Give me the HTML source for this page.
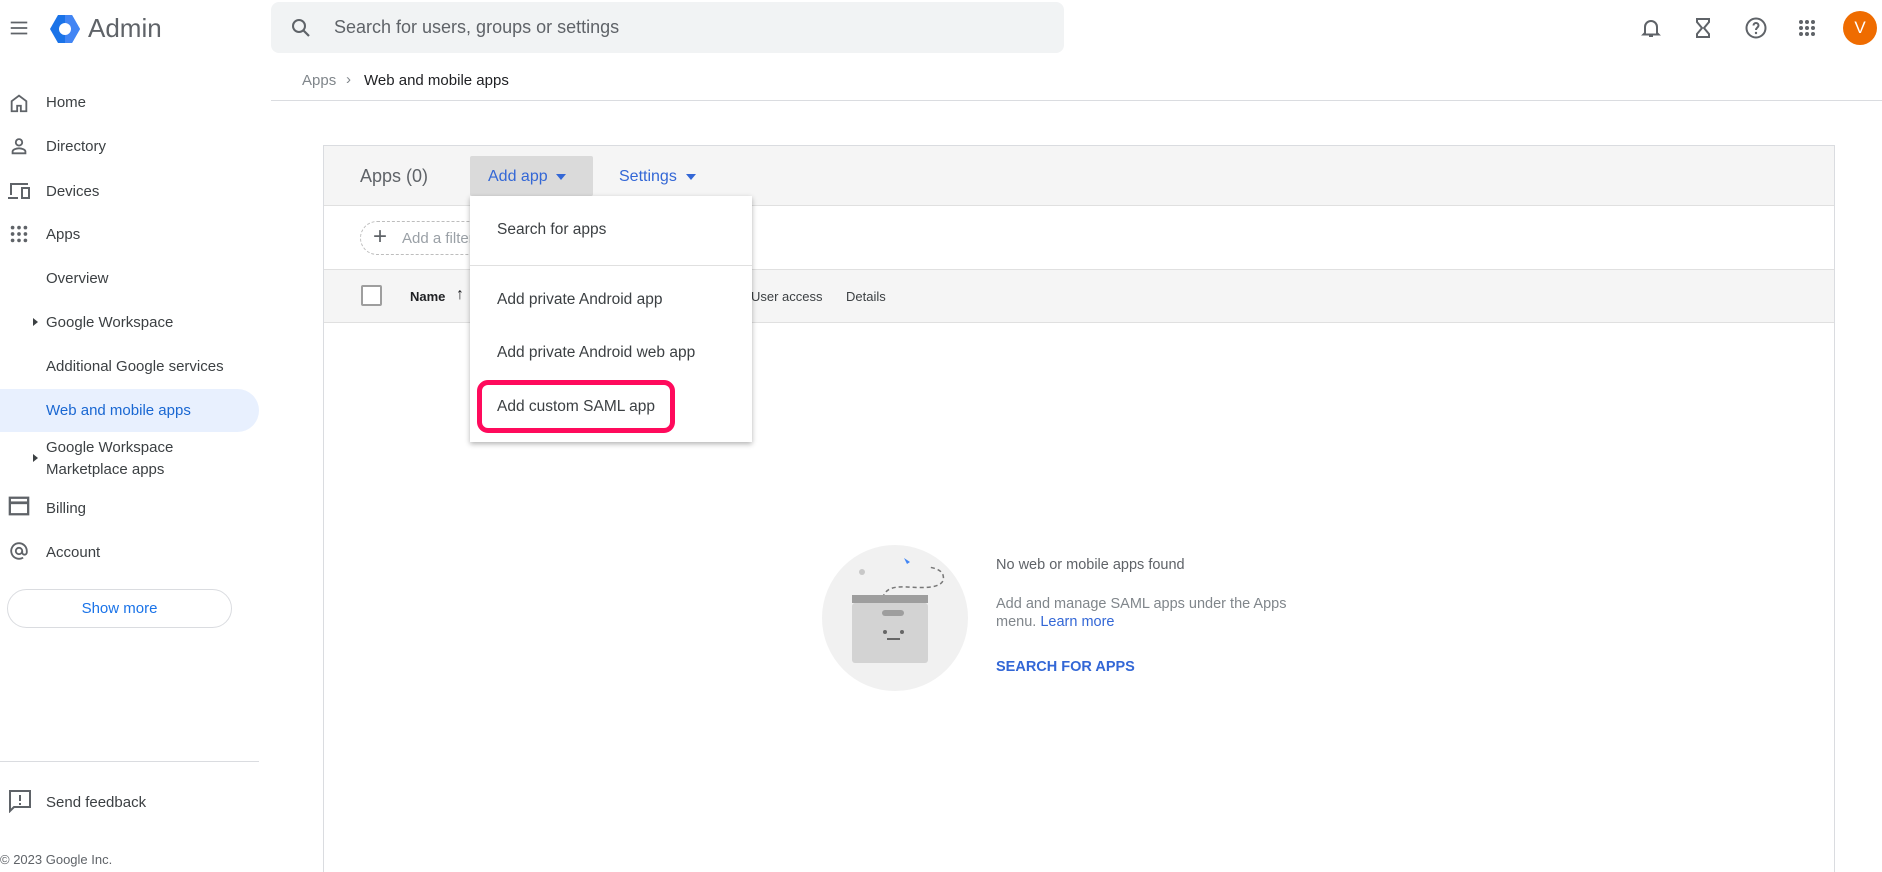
<!DOCTYPE html>
<html style="width:1882px;height:872px;overflow:hidden"><head><meta charset="utf-8"><style>
*{box-sizing:border-box;margin:0;padding:0}
body{width:1882px;height:872px;overflow:hidden;background:#fff;font-family:"Liberation Sans",Arial,sans-serif;color:#3c4043;position:relative}
.a{position:absolute;white-space:nowrap}
.nav{font-size:15px;color:#3c4043}
.blue{color:#3367d6}
</style></head><body>
<svg class="a" style="left:8px;top:17px" width="22" height="22" viewBox="0 0 24 24"><path d="M3 6h18M3 12h18M3 18h18" stroke="#5f6368" stroke-width="2"/></svg>
<svg class="a" style="left:49px;top:13px" width="32" height="32" viewBox="0 0 32 32"><path d="M9 2h14l8 14-8 14H9L1 16z" fill="#1a73e8"/><path d="M23 2l8 14-8 14H16V2z" fill="#4285f4"/><circle cx="16" cy="16" r="6" fill="#fff"/></svg>
<div class="a" style="left:88px;top:13px;font-size:26px;color:#5f6368">Admin</div>
<div class="a" style="left:271px;top:2px;width:793px;height:51px;background:#f1f3f4;border-radius:8px"></div>
<svg class="a" style="left:289px;top:16px" width="24" height="24" viewBox="0 0 24 24"><circle cx="10" cy="10" r="6" fill="none" stroke="#5f6368" stroke-width="2"/><path d="M14.5 14.5L20 20" stroke="#5f6368" stroke-width="2.2"/></svg>
<div class="a" style="left:334px;top:17px;font-size:18px;color:#5f6368">Search for users, groups or settings</div>
<svg class="a" style="left:1639px;top:16px" width="24" height="24" viewBox="0 0 24 24"><path d="M6 17V11a6 6 0 0112 0v6l1.5 1.5h-15z M10 20h4" fill="none" stroke="#5f6368" stroke-width="2"/></svg>
<svg class="a" style="left:1691px;top:16px" width="24" height="24" viewBox="0 0 24 24"><path d="M6 3h12v3l-5 6 5 6v3H6v-3l5-6-5-6z" fill="none" stroke="#5f6368" stroke-width="2"/></svg>
<svg class="a" style="left:1744px;top:16px" width="24" height="24" viewBox="0 0 24 24"><circle cx="12" cy="12" r="9.5" fill="none" stroke="#5f6368" stroke-width="2"/><path d="M9.5 9.5a2.5 2.5 0 115 0c0 2-2.5 2-2.5 4.5" fill="none" stroke="#5f6368" stroke-width="2"/><circle cx="12" cy="17" r="1.2" fill="#5f6368"/></svg>
<svg class="a" style="left:1795px;top:16px" width="24" height="24" viewBox="0 0 24 24" fill="#5f6368"><circle cx="6" cy="6" r="2"/><circle cx="12" cy="6" r="2"/><circle cx="18" cy="6" r="2"/><circle cx="6" cy="12" r="2"/><circle cx="12" cy="12" r="2"/><circle cx="18" cy="12" r="2"/><circle cx="6" cy="18" r="2"/><circle cx="12" cy="18" r="2"/><circle cx="18" cy="18" r="2"/></svg>
<div class="a" style="left:1843px;top:11px;width:34px;height:34px;border-radius:50%;background:#ef6c00;color:#fff;font-size:17px;text-align:center;line-height:34px">V</div>
<div class="a" style="left:302px;top:72px;font-size:15px;color:#80868b">Apps</div>
<div class="a" style="left:346px;top:71px;font-size:15px;color:#80868b">›</div>
<div class="a" style="left:364px;top:72px;font-size:15px;color:#202124">Web and mobile apps</div>
<div class="a" style="left:271px;top:100px;width:1611px;height:1px;background:#dadce0"></div>
<div class="a" style="left:0;top:389px;width:259px;height:43px;background:#e8f0fe;border-radius:0 22px 22px 0"></div>
<svg class="a" style="left:8px;top:92px" width="22" height="22" viewBox="0 0 24 24"><path d="M4 21V10l8-6 8 6v11h-6v-6h-4v6z" fill="none" stroke="#5f6368" stroke-width="2"/></svg>
<div class="a nav" style="left:46px;top:94px">Home</div>
<svg class="a" style="left:8px;top:135px" width="22" height="22" viewBox="0 0 24 24"><circle cx="12" cy="8" r="3.5" fill="none" stroke="#5f6368" stroke-width="2"/><path d="M5 20v-2c0-2 4-3.5 7-3.5s7 1.5 7 3.5v2z" fill="none" stroke="#5f6368" stroke-width="2"/></svg>
<div class="a nav" style="left:46px;top:138px">Directory</div>
<svg class="a" style="left:7px;top:180px" width="24" height="22" viewBox="0 0 24 22"><path d="M4 15V4h17M1 18h10M15 8h7v10h-7z" fill="none" stroke="#5f6368" stroke-width="2"/></svg>
<div class="a nav" style="left:46px;top:183px">Devices</div>
<svg class="a" style="left:8px;top:223px" width="22" height="22" viewBox="0 0 24 24" fill="#5f6368"><circle cx="5" cy="5" r="2"/><circle cx="12" cy="5" r="2"/><circle cx="19" cy="5" r="2"/><circle cx="5" cy="12" r="2"/><circle cx="12" cy="12" r="2"/><circle cx="19" cy="12" r="2"/><circle cx="5" cy="19" r="2"/><circle cx="12" cy="19" r="2"/><circle cx="19" cy="19" r="2"/></svg>
<div class="a nav" style="left:46px;top:226px">Apps</div>
<div class="a nav" style="left:46px;top:270px">Overview</div>
<div class="a" style="left:33px;top:318px;border-left:5px solid #3c4043;border-top:4px solid transparent;border-bottom:4px solid transparent"></div>
<div class="a nav" style="left:46px;top:314px">Google Workspace</div>
<div class="a nav" style="left:46px;top:358px">Additional Google services</div>
<div class="a nav" style="left:46px;top:402px;color:#1967d2">Web and mobile apps</div>
<div class="a" style="left:33px;top:454px;border-left:5px solid #3c4043;border-top:4px solid transparent;border-bottom:4px solid transparent"></div>
<div class="a nav" style="left:46px;top:439px">Google Workspace</div>
<div class="a nav" style="left:46px;top:461px">Marketplace apps</div>
<svg class="a" style="left:8px;top:495px" width="22" height="22" viewBox="0 0 24 24"><rect x="2" y="3" width="20" height="18" fill="none" stroke="#5f6368" stroke-width="2.5"/><rect x="2" y="7" width="20" height="3" fill="#5f6368"/></svg>
<div class="a nav" style="left:46px;top:500px">Billing</div>
<svg class="a" style="left:8px;top:539px" width="22" height="24" viewBox="0 0 24 24"><circle cx="12" cy="12" r="3.5" fill="none" stroke="#5f6368" stroke-width="2"/><path d="M15.5 12v1.5a2.5 2.5 0 005 0V12a8.5 8.5 0 10-4 7.2" fill="none" stroke="#5f6368" stroke-width="2"/></svg>
<div class="a nav" style="left:46px;top:544px">Account</div>
<div class="a" style="left:7px;top:589px;width:225px;height:39px;border:1px solid #dadce0;border-radius:20px;text-align:center;line-height:37px;font-size:15px;color:#1a73e8">Show more</div>
<div class="a" style="left:0;top:761px;width:259px;height:1px;background:#dadce0"></div>
<svg class="a" style="left:8px;top:789px" width="24" height="24" viewBox="0 0 24 24"><path d="M2 2h20v16H6l-4 4z" fill="none" stroke="#5f6368" stroke-width="2"/><path d="M12 6v6M12 14v2" stroke="#5f6368" stroke-width="2"/></svg>
<div class="a nav" style="left:46px;top:794px">Send feedback</div>
<div class="a" style="left:0;top:852px;font-size:13px;color:#5f6368">© 2023 Google Inc.</div>
<div class="a" style="left:323px;top:145px;width:1512px;height:740px;border:1px solid #dadce0;border-bottom:none"></div>
<div class="a" style="left:324px;top:146px;width:1510px;height:60px;background:#f5f5f5;border-bottom:1px solid #e0e0e0"></div>
<div class="a" style="left:360px;top:166px;font-size:18px;color:#5f6368">Apps (0)</div>
<div class="a" style="left:470px;top:156px;width:123px;height:40px;background:#dadada;border-radius:2px"></div>
<div class="a blue" style="left:488px;top:168px;font-size:16px">Add app</div>
<div class="a" style="left:556px;top:174px;border-top:6px solid #3367d6;border-left:5px solid transparent;border-right:5px solid transparent"></div>
<div class="a blue" style="left:619px;top:168px;font-size:16px">Settings</div>
<div class="a" style="left:686px;top:174px;border-top:6px solid #3367d6;border-left:5px solid transparent;border-right:5px solid transparent"></div>
<div class="a" style="left:360px;top:221px;width:130px;height:34px;border:1px dashed #bdbdbd;border-radius:17px"></div>
<div class="a" style="left:373px;top:223px;font-size:24px;color:#5f6368">+</div>
<div class="a" style="left:402px;top:230px;font-size:15px;color:#9aa0a6">Add a filter</div>
<div class="a" style="left:324px;top:269px;width:1510px;height:54px;background:#f5f5f5;border-top:1px solid #e0e0e0;border-bottom:1px solid #e0e0e0"></div>
<div class="a" style="left:361px;top:285px;width:21px;height:21px;border:2px solid #9e9e9e;border-radius:2px;background:#fff"></div>
<div class="a" style="left:410px;top:289px;font-size:13px;font-weight:bold;color:#202124">Name</div>
<div class="a" style="left:456px;top:286px;font-size:16px;color:#202124">↑</div>
<div class="a" style="left:751px;top:289px;font-size:13px;color:#3c4043">User access</div>
<div class="a" style="left:846px;top:289px;font-size:13px;color:#3c4043">Details</div>
<div class="a" style="left:470px;top:196px;width:282px;height:246px;background:#fff;box-shadow:0 2px 5px rgba(0,0,0,.3)"></div>
<div class="a" style="left:497px;top:221px;font-size:15.5px;color:#3c4043">Search for apps</div>
<div class="a" style="left:470px;top:265px;width:282px;height:1px;background:#e0e0e0"></div>
<div class="a" style="left:497px;top:291px;font-size:15.5px;color:#3c4043">Add private Android app</div>
<div class="a" style="left:497px;top:344px;font-size:15.5px;color:#3c4043">Add private Android web app</div>
<div class="a" style="left:477px;top:380px;width:198px;height:53px;border:5px solid #ff0a5c;border-radius:11px"></div>
<div class="a" style="left:497px;top:398px;font-size:15.5px;color:#3c4043">Add custom SAML app</div>
<div class="a" style="left:822px;top:545px;width:146px;height:146px;border-radius:50%;background:#f1f1f1"></div>
<svg class="a" style="left:822px;top:545px" width="146" height="146" viewBox="0 0 146 146">
<circle cx="40" cy="27" r="3" fill="#c8c8c8"/>
<path d="M60 60c0-15 8-19 25-18s40 2 36-12c-2-6-10-7-14-8" fill="none" stroke="#777" stroke-width="1.5" stroke-dasharray="4 3"/>
<path d="M82 13l6 4-3 2z" fill="#4285f4"/>
<rect x="30" y="50" width="76" height="8" fill="#9e9e9e"/>
<rect x="30" y="58" width="76" height="60" rx="3" fill="#d3d3d3"/>
<rect x="60" y="65" width="22" height="6" rx="3" fill="#9e9e9e"/>
<circle cx="63" cy="87" r="2" fill="#666"/><circle cx="80" cy="87" r="2" fill="#666"/>
<rect x="65" y="93" width="13" height="2" fill="#666"/>
</svg>
<div class="a" style="left:996px;top:557px;font-size:14.5px;color:#5f6368">No web or mobile apps found</div>
<div class="a" style="left:996px;top:596px;font-size:14.5px;color:#80868b">Add and manage SAML apps under the Apps</div>
<div class="a" style="left:996px;top:614px;font-size:14.5px;color:#80868b">menu. <span style="color:#3367d6">Learn more</span></div>
<div class="a" style="left:996px;top:659px;font-size:14.5px;font-weight:bold;color:#3367d6">SEARCH FOR APPS</div>
</body></html>
